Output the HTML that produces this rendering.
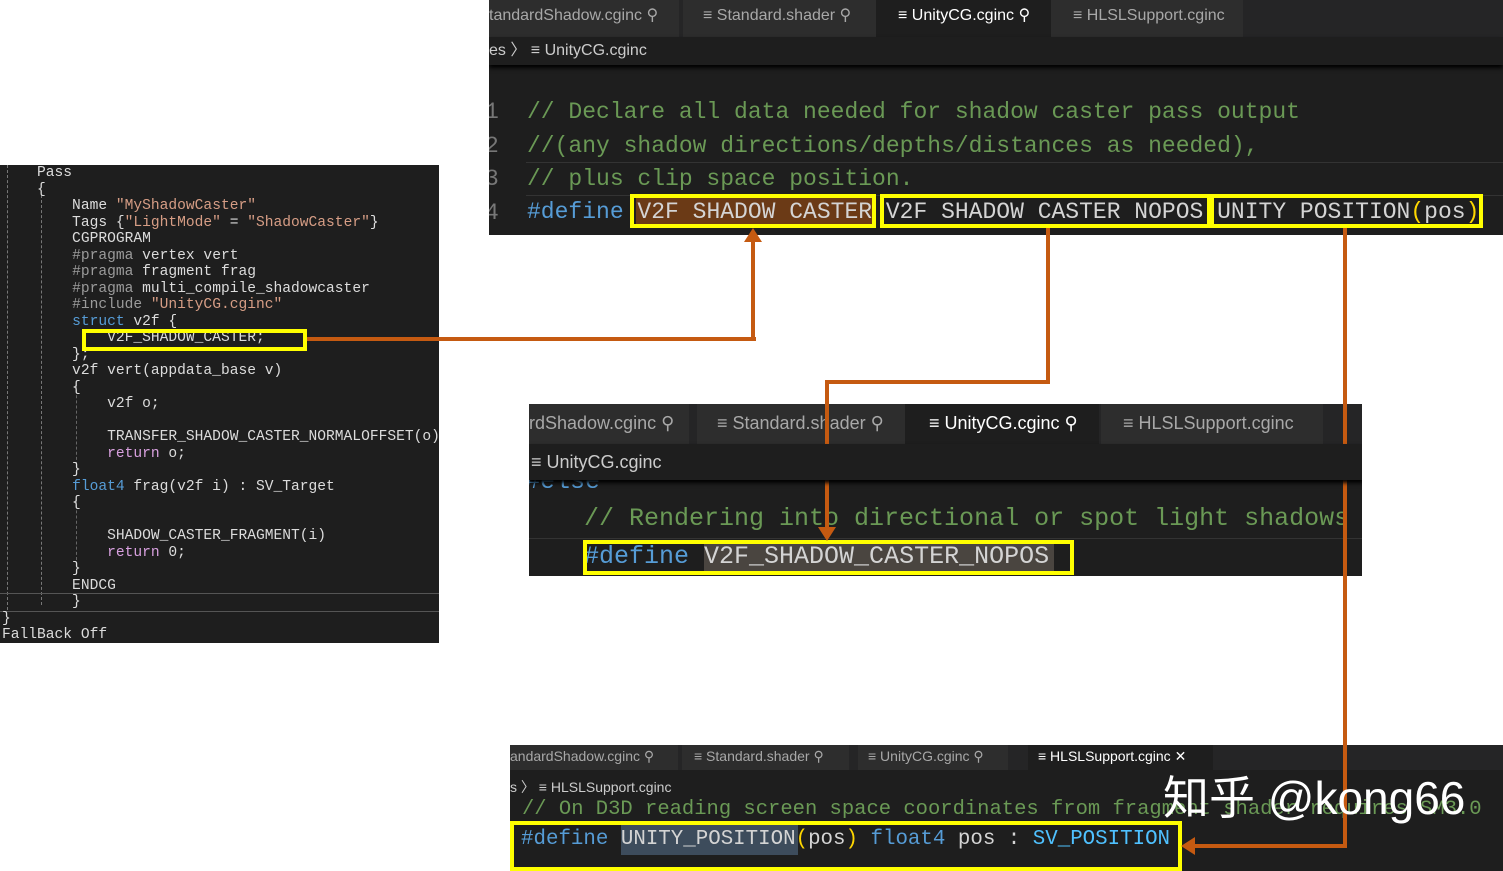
<!DOCTYPE html>
<html><head><meta charset="utf-8"><style>
body{margin:0;width:1503px;height:871px;background:#fff;position:relative;overflow:hidden;font-family:"Liberation Sans",sans-serif}
.a{position:absolute}
.p{position:absolute;background:#1e1e1e;overflow:hidden}
.tabs{position:absolute;left:0;right:0;top:0;background:#252526}
.tab{position:absolute;top:0;bottom:0;background:#2d2d2d;color:#a8a8a8;white-space:nowrap;font-family:"Liberation Sans Narrow","Liberation Sans",sans-serif}
.tab.on{background:#1e1e1e;color:#fff}
.m{font-family:"Liberation Mono",monospace;white-space:pre;position:absolute}
.c{color:#6a9955}.k{color:#569cd6}.w{color:#d4d4d4}.y{color:#ffd700}
.yb{position:absolute;border:4px solid #ffff00;box-sizing:border-box}
.ar{position:absolute;background:#c55a11}
.l{font-family:"Liberation Mono",monospace;font-size:14.6px;color:#dcdcdc;white-space:pre;position:absolute;left:2px}
</style></head><body>

<!-- Panel 1 -->
<div class="p" style="left:489px;top:0;width:1014px;height:235px">
 <div class="tabs" style="height:37px">
  <div class="tab" style="left:0;width:190px;font-size:16px;line-height:31px;padding-left:0">tandardShadow.cginc ⚲</div>
  <div class="tab" style="left:194px;width:185px;font-size:16px;line-height:31px;padding-left:20px">≡ Standard.shader ⚲</div>
  <div class="tab on" style="left:387px;width:170px;font-size:16px;line-height:31px;padding-left:22px">≡ UnityCG.cginc ⚲</div>
  <div class="tab" style="left:562px;width:170px;font-size:16px;line-height:31px;padding-left:22px">≡ HLSLSupport.cginc</div>
 </div>
 <div class="a" style="left:0;top:37px;width:1014px;height:28px;color:#ccc;font-size:16px;line-height:28px;background:#1e1e1e;box-shadow:0 3px 4px #000">es 〉 ≡ UnityCG.cginc</div>
 <div class="a" style="left:37px;top:162px;width:977px;height:32px;border-top:1px solid #333;border-bottom:1px solid #333"></div>
 <div class="m" style="left:-4px;top:96px;font-size:23px;line-height:33.5px;color:#777">1
2
3
4</div>
 <div class="m c" style="left:38px;top:96px;font-size:23px;line-height:33.5px">// Declare all data needed for shadow caster pass output
//(any shadow directions/depths/distances as needed),
// plus clip space position.</div>
 <div class="a" style="left:147px;top:196px;width:240px;height:30px;background:#6b3a16"></div>
 <div class="m" style="left:38px;top:196px;font-size:23px;line-height:33px"><span class="k">#define</span><span class="w"> V2F SHADOW CASTER V2F SHADOW CASTER NOPOS UNITY POSITION</span><span class="y">(</span><span class="w">pos</span><span class="y">)</span></div>
</div>

<!-- Panel 2 -->
<div class="p" style="left:529px;top:404px;width:833px;height:172px">
 <div class="tabs" style="height:40px">
  <div class="tab" style="left:0;width:160px;font-size:18px;line-height:38px">rdShadow.cginc ⚲</div>
  <div class="tab" style="left:168px;width:200px;font-size:18px;line-height:38px;padding-left:20px">≡ Standard.shader ⚲</div>
  <div class="tab on" style="left:376px;width:170px;font-size:18px;line-height:38px;padding-left:24px">≡ UnityCG.cginc ⚲</div>
  <div class="tab" style="left:572px;width:200px;font-size:18px;line-height:38px;padding-left:22px">≡ HLSLSupport.cginc</div>
 </div>
 <div class="a" style="left:0;top:40px;width:833px;height:36px;background:#1e1e1e;color:#ccc;font-size:18px;line-height:36px;padding-left:2px;box-shadow:0 3px 4px #000;z-index:2">≡ UnityCG.cginc</div>
 <div class="m k" style="left:-4px;top:60px;font-size:25px;line-height:36px">#else</div>
 <div class="a" style="left:0;top:134px;width:833px;height:1px;background:#333"></div>
 <div class="a" style="left:175px;top:138px;width:350px;height:32px;background:#4a4540"></div>
 <div class="m" style="left:55px;top:96px;font-size:25px;line-height:38px"><span class="c">// Rendering into directional or spot light shadows</span>
<span class="k">#define</span><span class="w"> V2F_SHADOW_CASTER_NOPOS</span></div>
</div>

<!-- Panel 3 -->
<div class="p" style="left:510px;top:745px;width:993px;height:126px">
 <div class="tabs" style="height:25px">
  <div class="tab" style="left:0;width:168px;font-size:14px;line-height:22px">andardShadow.cginc ⚲</div>
  <div class="tab" style="left:172px;width:155px;font-size:14px;line-height:22px;padding-left:12px">≡ Standard.shader ⚲</div>
  <div class="tab" style="left:348px;width:140px;font-size:14px;line-height:22px;padding-left:10px">≡ UnityCG.cginc ⚲</div>
  <div class="tab on" style="left:518px;width:175px;font-size:14px;line-height:22px;padding-left:10px">≡ HLSLSupport.cginc ✕</div>
 </div>
 <div class="a" style="left:0;top:28px;color:#ccc;font-size:14px;line-height:28px">s 〉 ≡ HLSLSupport.cginc</div>
 <div class="m c" style="left:12px;top:52px;font-size:20.5px;line-height:26px">// On D3D reading screen space coordinates from fragment shader requires SM3.0</div>
 <div class="a" style="left:111px;top:80px;width:177px;height:30px;background:#3d4c5c"></div>
 <div class="m" style="left:11px;top:80px;font-size:20.8px;line-height:30px"><span class="k">#define</span><span class="w"> UNITY_POSITION</span><span class="y">(</span><span class="w">pos</span><span class="y">)</span><span class="k"> float4</span><span class="w"> pos : </span><span style="color:#4fc1ff">SV_POSITION</span></div>
</div>

<!-- Left panel -->
<div class="p" style="left:0;top:165px;width:439px;height:478px;font-family:'Liberation Mono',monospace">
 <div class="a" style="left:7px;top:0;width:0;height:445px;border-left:1px dashed #777"></div>
 <div class="a" style="left:41px;top:30px;width:0;height:410px;border-left:1px dashed #777"></div>
 <div class="a" style="left:76px;top:220px;width:0;height:80px;border-left:1px dashed #666"></div>
 <div class="a" style="left:76px;top:335px;width:0;height:60px;border-left:1px dashed #666"></div>
 <div class="a" style="left:0;top:428px;width:439px;height:1px;background:#555"></div>
 <div class="a" style="left:0;top:446px;width:439px;height:1px;background:#555"></div>
 <div class="l" style="top:0;line-height:16.5px">    Pass
    {
        Name <span style="color:#d69d85">"MyShadowCaster"</span>
        Tags {<span style="color:#d69d85">"LightMode"</span> = <span style="color:#d69d85">"ShadowCaster"</span>}
        CGPROGRAM
        <span style="color:#9b9b9b">#pragma</span> vertex vert
        <span style="color:#9b9b9b">#pragma</span> fragment frag
        <span style="color:#9b9b9b">#pragma</span> multi_compile_shadowcaster
        <span style="color:#9b9b9b">#include</span> <span style="color:#d69d85">"UnityCG.cginc"</span>
        <span style="color:#569cd6">struct</span> v2f {
            V2F_SHADOW_CASTER;
        };
        v2f vert(appdata_base v)
        {
            v2f o;

            TRANSFER_SHADOW_CASTER_NORMALOFFSET(o)
            <span style="color:#d8a0df">return</span> o;
        }
        <span style="color:#569cd6">float4</span> frag(v2f i) : SV_Target
        {

            SHADOW_CASTER_FRAGMENT(i)
            <span style="color:#d8a0df">return</span> 0;
        }
        ENDCG
        }
}
FallBack Off</div>
</div>

<!-- yellow boxes -->
<div class="yb" style="left:82px;top:329px;width:225px;height:22px"></div>
<div class="yb" style="left:630px;top:194px;width:246px;height:34px"></div>
<div class="yb" style="left:880px;top:194px;width:331px;height:34px"></div>
<div class="yb" style="left:1210px;top:194px;width:273px;height:34px"></div>
<div class="yb" style="left:583px;top:540px;width:491px;height:35px"></div>
<div class="yb" style="left:510px;top:821px;width:672px;height:50px"></div>

<!-- arrows -->
<div class="ar" style="left:307px;top:337px;width:449px;height:4px"></div>
<div class="ar" style="left:751px;top:240px;width:4px;height:101px"></div>
<div class="a" style="left:744px;top:228px;border-left:9px solid transparent;border-right:9px solid transparent;border-bottom:14px solid #c55a11"></div>

<div class="ar" style="left:1046px;top:228px;width:4px;height:156px"></div>
<div class="ar" style="left:825px;top:380px;width:225px;height:4px"></div>
<div class="ar" style="left:825px;top:380px;width:4px;height:148px"></div>
<div class="a" style="left:818px;top:527px;border-left:9px solid transparent;border-right:9px solid transparent;border-top:14px solid #c55a11"></div>

<div class="ar" style="left:1343px;top:228px;width:4px;height:620px"></div>
<div class="ar" style="left:1195px;top:844px;width:152px;height:4px"></div>
<div class="a" style="left:1181px;top:837px;border-top:9px solid transparent;border-bottom:9px solid transparent;border-right:14px solid #c55a11"></div>

<div class="a" style="left:1163px;top:770px;color:#fff;font-size:46px;line-height:56px;font-family:'Liberation Sans','Noto Sans CJK SC',sans-serif;white-space:nowrap">知乎 @kong66</div>
</body></html>
